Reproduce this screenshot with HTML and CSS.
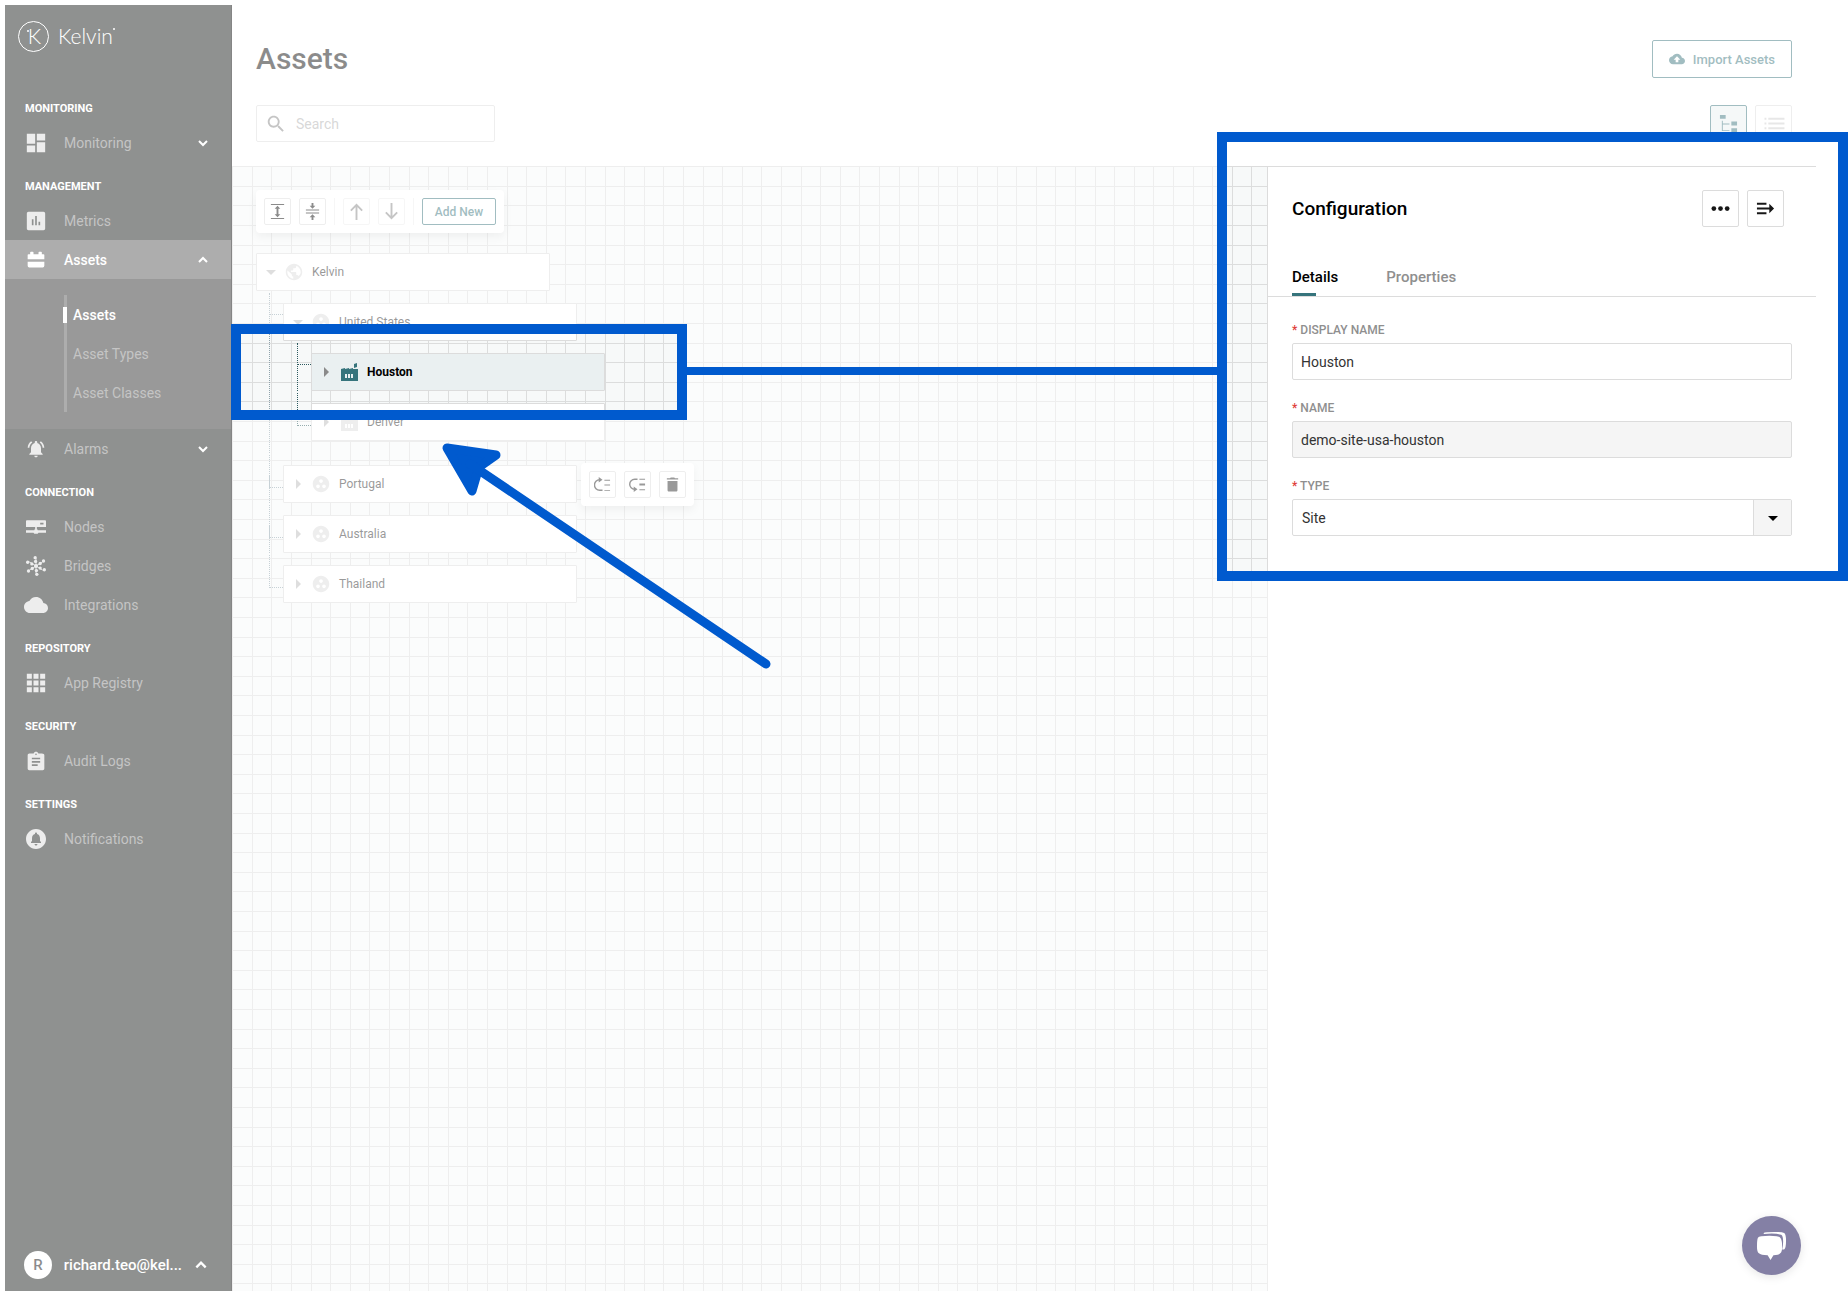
FILE: index.html
```
<!DOCTYPE html>
<html lang="en">
<head>
    <meta charset="UTF-8">
    <meta name="viewport" content="width=device-width, initial-scale=1.0">
    <title>Kelvin - Assets</title>
    <link rel="stylesheet" href="styles.css">
</head>
<body>
    <!-- Shared icons -->
    <svg class="sprite" aria-hidden="true">
        <symbol id="i-down" viewBox="0 0 12 12"><path d="M2 4l4 4 4-4" fill="none" stroke="currentColor" stroke-width="2"/></symbol>
        <symbol id="i-up" viewBox="0 0 12 12"><path d="M2 8l4-4 4 4" fill="none" stroke="currentColor" stroke-width="2"/></symbol>
        <symbol id="i-caret-down" viewBox="0 0 10 10"><path d="M0 3h10L5 8z"/></symbol>
        <symbol id="i-caret-right" viewBox="0 0 10 10"><path d="M3 0v10l5-5z"/></symbol>
        <symbol id="i-group" viewBox="0 0 24 24"><path d="M12 1C6 1 1 6 1 12s5 11 11 11 11-5 11-11S18 1 12 1zM8 17.500c-1.380 0-2.500-1.120-2.500-2.500s1.120-2.500 2.500-2.500 2.500 1.120 2.500 2.500-1.120 2.500-2.500 2.500zM9.500 8c0-1.380 1.120-2.500 2.500-2.500s2.500 1.120 2.500 2.500-1.120 2.500-2.500 2.500S9.500 9.380 9.500 8zm6.500 9.500c-1.380 0-2.500-1.120-2.500-2.500s1.120-2.500 2.500-2.500 2.500 1.120 2.500 2.500-1.120 2.500-2.500 2.500z"/></symbol>
        <symbol id="i-site" viewBox="0 0 18 18"><path fill-rule="evenodd" d="M1 6l4-1v1l4-1v1l4-1v1h5v12H1zM5 11v4h2v-4zM8 11v4h2v-4zM11 11v4h2v-4zM14 1l3-1v4l-3 1z"/></symbol>
    </svg>

    <div class="page">
        <nav class="sidebar">
            <div class="logo"><span class="logo-mark">K</span><span class="logo-name">Kelvin</span></div>

            <h2 class="nav-heading">MONITORING</h2>
            <a class="nav-item" href="#">
                <svg class="nav-icon" viewBox="0 0 24 24"><path d="M1 13h10V1H1v12zm0 10h10v-8H1v8zm12 0h10V11H13v12zm0-22v8h10V1H13z"/></svg>
                <span>Monitoring</span>
                <svg class="chevron"><use href="#i-down"/></svg>
            </a>

            <h2 class="nav-heading">MANAGEMENT</h2>
            <a class="nav-item" href="#">
                <svg class="nav-icon" viewBox="0 0 24 24"><path d="M21 1H3C1.900 1 1 1.900 1 3v18c0 1.100.9 2 2 2h18c1.100 0 2-.9 2-2V3c0-1.100-.9-2-2-2zM9 17H7v-7h2v7zm4 0h-2V6h2v11zm4 0h-2v-4h2v4z"/></svg>
                <span>Metrics</span>
            </a>
            <a class="nav-item nav-item-open" href="#">
                <svg class="nav-icon" viewBox="0 0 24 24"><path d="M2 6q0-1 1-1h2V3q0-1 1-1h2q1 0 1 1v2h6V3q0-1 1-1h2q1 0 1 1v2h2q1 0 1 1v5H2zM2 14h20v5q0 2-2 2H4q-2 0-2-2z"/></svg>
                <span>Assets</span>
                <svg class="chevron"><use href="#i-up"/></svg>
            </a>
            <div class="submenu">
                <a class="submenu-item active" href="#">Assets</a>
                <a class="submenu-item" href="#">Asset Types</a>
                <a class="submenu-item" href="#">Asset Classes</a>
            </div>
            <a class="nav-item" href="#">
                <svg class="nav-icon" viewBox="0 0 24 24"><path d="M7.580 4.080L6.150 2.650C3.750 4.480 2.170 7.300 2.030 10.500h2c.15-2.650 1.510-4.970 3.550-6.420zm12.390 6.420h2c-.15-3.200-1.730-6.020-4.120-7.850l-1.420 1.430c2.020 1.450 3.390 3.770 3.540 6.420zM18 11c0-3.070-1.640-5.640-4.500-6.320V4c0-.83-.67-1.500-1.500-1.500s-1.500.67-1.500 1.500v.68C7.630 5.360 6 7.920 6 11v5l-2 2v1h16v-1l-2-2v-5zm-6 11c1.100 0 2-.9 2-2h-4c0 1.100.9 2 2 2z"/></svg>
                <span>Alarms</span>
                <svg class="chevron"><use href="#i-down"/></svg>
            </a>

            <h2 class="nav-heading">CONNECTION</h2>
            <a class="nav-item" href="#">
                <svg class="nav-icon" viewBox="0 0 24 24"><path fill-rule="evenodd" d="M1 4h22q1 0 1 1v7H0V5q0-1 1-1zM17 7v2h4V7zM11 12h2v3h1v1h10v3h-9l-1 1h-4l-1-1H0v-3h10v-1h1z"/></svg>
                <span>Nodes</span>
            </a>
            <a class="nav-item" href="#">
                <svg class="nav-icon" viewBox="0 0 24 24"><path d="M12 3v18M4 7l16 10M20 7L4 17" stroke="currentColor" stroke-width="1"/><circle cx="12" cy="12" r="2.500"/><circle cx="11" cy="2" r="2"/><circle cx="13" cy="22" r="2"/><circle cx="2" cy="7.500" r="2"/><circle cx="21" cy="6" r="2"/><circle cx="3" cy="18" r="2"/><circle cx="22" cy="16.500" r="2"/><circle cx="11.500" cy="6.500" r="2"/><circle cx="12.500" cy="17.500" r="2"/><circle cx="7" cy="9.500" r="2"/><circle cx="17" cy="9" r="2"/><circle cx="7.500" cy="15" r="2"/><circle cx="17" cy="14.500" r="2"/></svg>
                <span>Bridges</span>
            </a>
            <a class="nav-item" href="#">
                <svg class="nav-icon nav-icon-lg" viewBox="0 0 24 24"><path d="M19.350 10.040C18.670 6.590 15.640 4 12 4 9.110 4 6.600 5.640 5.350 8.040 2.340 8.360 0 10.910 0 14c0 3.310 2.690 6 6 6h13c2.760 0 5-2.240 5-5 0-2.640-2.050-4.780-4.650-4.960z"/></svg>
                <span>Integrations</span>
            </a>

            <h2 class="nav-heading">REPOSITORY</h2>
            <a class="nav-item" href="#">
                <svg class="nav-icon" viewBox="0 0 24 24"><path d="M1 1h6v6H1zM9 1h6v6H9zM17 1h6v6h-6zM1 9h6v6H1zM9 9h6v6H9zM17 9h6v6h-6zM1 17h6v6H1zM9 17h6v6H9zM17 17h6v6h-6z"/></svg>
                <span>App Registry</span>
            </a>

            <h2 class="nav-heading">SECURITY</h2>
            <a class="nav-item" href="#">
                <svg class="nav-icon" viewBox="0 0 24 24"><path d="M19 3h-4.180C14.400 1.840 13.300 1 12 1c-1.300 0-2.400.84-2.820 2H4c-1.100 0-2 .9-2 2v16c0 1.100.9 2 2 2h16c1.100 0 2-.9 2-2V5c0-1.100-.9-2-3-2zm-7 0c.55 0 1 .45 1 1s-.45 1-1 1-1-.45-1-1 .45-1 1-1zm2 15H7v-2h7v2zm3-4H7v-2h10v2zm0-4H7V8h10v2z"/></svg>
                <span>Audit Logs</span>
            </a>

            <h2 class="nav-heading">SETTINGS</h2>
            <a class="nav-item" href="#">
                <svg class="nav-icon nav-icon-lg" viewBox="0 0 24 24"><path d="M12 2C6.480 2 2 6.480 2 12s4.480 10 10 10 10-4.480 10-10S17.520 2 12 2zm0 16.500c-.83 0-1.500-.67-1.500-1.500h3c0 .83-.67 1.500-1.500 1.500zm5-2.500H7v-1l1-1v-2.610C8 9.270 9.030 7.470 11 7v-.5c0-.57.43-1 1-1s1 .43 1 1V7c1.970.47 3 2.280 3 4.390V14l1 1v1z"/></svg>
                <span>Notifications</span>
            </a>

            <a class="user" href="#">
                <span class="avatar">R</span>
                <span class="user-name">richard.teo@kel...</span>
                <svg class="chevron chevron-lg"><use href="#i-up"/></svg>
            </a>
        </nav>

        <main class="main">
            <header class="header">
                <div class="header-row">
                    <h1>Assets</h1>
                    <button class="btn-outline btn-import">
                        <svg viewBox="0 0 24 24"><path d="M19.350 10.040C18.670 6.590 15.640 4 12 4 9.110 4 6.600 5.640 5.350 8.040 2.340 8.360 0 10.910 0 14c0 3.310 2.690 6 6 6h13c2.760 0 5-2.240 5-5 0-2.640-2.050-4.780-4.650-4.960zM14 13v4h-4v-4H7l5-5 5 5h-3z"/></svg>
                        Import Assets
                    </button>
                </div>
                <div class="header-row">
                    <label class="search">
                        <svg viewBox="0 0 24 24"><path d="M15.500 14h-.79l-.28-.27C15.410 12.590 16 11.110 16 9.500 16 5.910 13.090 3 9.500 3S3 5.910 3 9.500 5.910 16 9.500 16c1.610 0 3.090-.59 4.230-1.570l.27.28v.79l5 4.990L20.490 19l-4.990-5zm-6 0C7.010 14 5 11.990 5 9.500S7.010 5 9.500 5 14 7.010 14 9.500 11.990 14 9.500 14z"/></svg>
                        <input type="search" placeholder="Search" aria-label="Search">
                    </label>
                    <div class="button-group">
                        <button class="btn-square selected" aria-label="Tree view">
                            <svg viewBox="0 0 20 20"><path d="M1 1h6v4H1zM13 8h6v4h-6zM13 15h6v4h-6zM3 7h1v3h7v1H4v6h7v1H3z"/></svg>
                        </button>
                        <button class="btn-square muted" aria-label="List view">
                            <svg class="icon-wide" viewBox="0 0 22 20"><path d="M1 4h2v2H1zM5 4h17v2H5zM1 9h2v2H1zM5 9h17v2H5zM1 14h2v2H1zM5 14h17v2H5z"/></svg>
                        </button>
                    </div>
                </div>
            </header>

            <div class="workspace">
                <section class="canvas">
                    <div class="toolbar">
                        <button class="btn-tool" aria-label="Expand all"><svg viewBox="0 0 18 18"><path d="M2 1h14v1H2zM2 16h14v1H2zM8 6h2v6h2l-3 3-3-3h2zM6 6l3-3 3 3z"/></svg></button>
                        <button class="btn-tool" aria-label="Collapse all"><svg viewBox="0 0 18 18"><path d="M2 7h14v1H2zM2 10h14v1H2zM8 0h2v3h2L9 6 6 3h2zM8 18h2v-3h2l-3-3-3 3h2z"/></svg></button>
                        <span class="separator"></span>
                        <button class="btn-tool" disabled aria-label="Move up"><svg viewBox="0 0 18 18"><path d="M9 18V2M3 8l6-6 6 6" fill="none" stroke="currentColor" stroke-width="2"/></svg></button>
                        <button class="btn-tool" disabled aria-label="Move down"><svg viewBox="0 0 18 18"><path d="M9 0v16M3 10l6 6 6-6" fill="none" stroke="currentColor" stroke-width="2"/></svg></button>
                        <span class="separator"></span>
                        <button class="btn-outline btn-add">Add New</button>
                    </div>

                    <div class="tree">
                        <div class="node">
                            <svg class="caret"><use href="#i-caret-down"/></svg>
                            <svg class="node-icon" viewBox="0 0 24 24"><path d="M12 1C6 1 1 6 1 12s5 11 11 11 11-5 11-11S18 1 12 1zm-1 19.900c-4.400-.5-7.900-4.300-7.900-8.900 0-.7.1-1.300.2-2L9 15v1c0 1.100.9 2 2 2v2.900zm7-3.500c-.3-.8-1-1.400-2-1.400h-1v-3c0-.55-.45-1-1-1H8v-2h2c.55 0 1-.45 1-1V7h2c1.100 0 2-.9 2-2V3.700c3.300 1.300 5.900 4.500 5.900 8.300 0 2.100-1 4-2.900 5.400z"/></svg>
                            <span>Kelvin</span>
                        </div>
                        <ul class="branch">
                            <li>
                                <div class="node">
                                    <svg class="caret"><use href="#i-caret-down"/></svg>
                                    <svg class="node-icon"><use href="#i-group"/></svg>
                                    <span>United States</span>
                                </div>
                                <ul class="branch branch-active">
                                    <li>
                                        <div class="node selected">
                                            <svg class="caret"><use href="#i-caret-right"/></svg>
                                            <svg class="node-icon"><use href="#i-site"/></svg>
                                            <span>Houston</span>
                                        </div>
                                    </li>
                                    <li>
                                        <div class="node">
                                            <svg class="caret"><use href="#i-caret-right"/></svg>
                                            <svg class="node-icon"><use href="#i-site"/></svg>
                                            <span>Denver</span>
                                        </div>
                                    </li>
                                </ul>
                            </li>
                            <li>
                                <div class="node">
                                    <svg class="caret"><use href="#i-caret-right"/></svg>
                                    <svg class="node-icon"><use href="#i-group"/></svg>
                                    <span>Portugal</span>
                                    <div class="node-actions">
                                        <button class="btn-tool" aria-label="Add above"><svg viewBox="0 0 18 18"><path d="M11 4h6v1h-6zM11 9h6v1h-6zM11 15h6v1h-6zM5 1l4 3-4 3z"/><path d="M6 4a5 5 0 0 0 0 11h3" fill="none" stroke="currentColor" stroke-width="1.500"/></svg></button>
                                        <button class="btn-tool" aria-label="Add below"><svg viewBox="0 0 18 18"><path d="M11 3h6v1h-6zM11 8h6v2h-6zM11 14h6v1h-6zM5 11l4 3-4 3z"/><path d="M9 3.500H6a5 5 0 0 0 0 10.500" fill="none" stroke="currentColor" stroke-width="1.500"/></svg></button>
                                        <button class="btn-tool" aria-label="Delete"><svg viewBox="0 0 24 24"><path d="M5 20c0 1.100.9 2 2 2h10c1.100 0 2-.9 2-2V7H5v13zM20 3h-4.500l-1-1h-5l-1 1H4v2h16V3z"/></svg></button>
                                    </div>
                                </div>
                            </li>
                            <li>
                                <div class="node">
                                    <svg class="caret"><use href="#i-caret-right"/></svg>
                                    <svg class="node-icon"><use href="#i-group"/></svg>
                                    <span>Australia</span>
                                </div>
                            </li>
                            <li>
                                <div class="node">
                                    <svg class="caret"><use href="#i-caret-right"/></svg>
                                    <svg class="node-icon"><use href="#i-group"/></svg>
                                    <span>Thailand</span>
                                </div>
                            </li>
                        </ul>
                    </div>
                </section>

                <aside class="panel">
                    <div class="panel-header">
                        <h2>Configuration</h2>
                        <div class="button-group">
                            <button class="btn-square" aria-label="More"><svg viewBox="0 0 20 20"><circle cx="3" cy="10" r="2.500"/><circle cx="10" cy="10" r="2.500"/><circle cx="17" cy="10" r="2.500"/></svg></button>
                            <button class="btn-square" aria-label="Close panel"><svg viewBox="0 0 20 20"><path d="M1 4h10v2H1zM1 9h13V5l5 5-5 5v-4H1zM1 14h10v2H1z"/></svg></button>
                        </div>
                    </div>
                    <div class="tabs">
                        <button class="tab active">Details</button>
                        <button class="tab">Properties</button>
                    </div>
                    <form class="form">
                        <div class="field">
                            <label for="displayName"><span class="required">*</span> DISPLAY NAME</label>
                            <input type="text" id="displayName" value="Houston">
                        </div>
                        <div class="field">
                            <label for="name"><span class="required">*</span> NAME</label>
                            <input type="text" id="name" value="demo-site-usa-houston" readonly>
                        </div>
                        <div class="field">
                            <label for="type"><span class="required">*</span> TYPE</label>
                            <div class="select">
                                <select id="type"><option>Site</option></select>
                                <span class="select-arrow"><svg viewBox="0 0 10 10"><path d="M0 3h10L5 8z"/></svg></span>
                            </div>
                        </div>
                    </form>
                </aside>
            </div>
        </main>

        <!-- Tour layer: dims the page and points at the selected asset -->
        <div class="dim"></div>
        <div class="callout callout-node"></div>
        <div class="callout-line"></div>
        <div class="callout callout-panel"></div>
        <svg class="pointer" viewBox="0 0 340 240">
            <path d="M7 8l49 7-17 12-7 24z" fill="currentColor" stroke="currentColor" stroke-width="9" stroke-linejoin="round"/>
            <path d="M30 24L326 224" stroke="currentColor" stroke-width="9" stroke-linecap="round"/>
        </svg>

        <button class="chat" aria-label="Open chat">
            <svg viewBox="0 0 32 32"><path d="M8 3q1-1 11-1 8 0 10 1 2 1 2 8 0 8-2 9h-2q1-3 1-8 0-6-2-7-4-2-18-1z"/><path d="M2 8q1-2 12-2 10 0 11 2 2 2 2 9 0 6-2 7-1 2-7 2l-3 5-3-5q-7 0-9-2-2-1-2-7 0-7 1-9z"/></svg>
        </button>
    </div>
</body>
</html>
```
FILE: styles.css
```
* {
    box-sizing: border-box;
}
body {
    margin: 0;
    font-family: Roboto, "Liberation Sans", sans-serif;
    font-size: 14px;
    background: white;
    color: #171717;
}
h1, h2, ul {
    margin: 0;
    padding: 0;
}
button, input, select {
    font: inherit;
    color: inherit;
}
button {
    display: flex;
    align-items: center;
    justify-content: center;
    padding: 0;
    cursor: pointer;
}
a {
    color: inherit;
    text-decoration: none;
}
svg {
    fill: currentColor;
    flex-shrink: 0;
}
.sprite {
    position: absolute;
    width: 0;
    height: 0;
}
.page {
    position: relative;
    display: flex;
    min-height: 100vh;
    padding: 5px 32px 21px 5px;
}

/* Sidebar */
.sidebar {
    display: flex;
    flex-direction: column;
    width: 227px;
    flex-shrink: 0;
    background: #1f2321;
    border-right: 1px solid #0b0b0b;
    color: white;
}
.logo {
    display: flex;
    align-items: center;
    gap: 9px;
    height: 30px;
    margin: 16px 0 33px 13px;
    font-family: Lato, sans-serif;
    font-weight: 300;
    font-size: 21px;
    line-height: 28px;
}
.logo-mark {
    position: relative;
    display: flex;
    align-items: center;
    justify-content: center;
    width: 31px;
    height: 31px;
    padding-left: 2px;
    border: 1px solid white;
    border-radius: 50%;
}
.logo-name {
    position: relative;
}
.logo-mark::before, .logo-name::after {
    content: "";
    position: absolute;
    width: 2px;
    height: 2px;
    border-radius: 50%;
    background: white;
}
.logo-mark::before {
    top: 8px;
    left: 8px;
}
.logo-name::after {
    top: 6px;
    right: -2px;
}
.nav-heading {
    height: 39px;
    padding: 18px 20px 0;
    font-size: 11px;
    line-height: 14px;
    font-weight: 700;
}
.nav-item {
    display: flex;
    align-items: center;
    gap: 16px;
    height: 39px;
    padding: 0 22px 0 19px;
    color: #8a8a8a;
}
.nav-icon {
    width: 20px;
    height: 20px;
    margin: 0 2px;
    color: #dbdbdb;
}
.nav-icon-lg {
    width: 24px;
    height: 24px;
    margin: 0;
}
.chevron {
    width: 12px;
    height: 12px;
    margin-left: auto;
    color: white;
}
.nav-item-open {
    background: #5b5b5b;
    color: white;
    font-weight: 500;
}
.nav-item-open .nav-icon {
    color: white;
}
.submenu {
    padding: 16px 0 17px 59px;
    background: #333;
}
.submenu-item {
    display: flex;
    align-items: center;
    height: 39px;
    border-left: 3px solid #5b5b5b;
    padding-left: 6px;
    color: #8a8a8a;
}
.submenu-item.active {
    position: relative;
    color: white;
    font-weight: 500;
}
.submenu-item.active::before {
    content: "";
    position: absolute;
    left: -4px;
    width: 4px;
    height: 16px;
    background: white;
}
.user {
    display: flex;
    align-items: center;
    gap: 12px;
    margin-top: auto;
    padding: 12px 23px 12px 19px;
    font-size: 15px;
    font-weight: 500;
}
.avatar {
    width: 28px;
    height: 28px;
    border-radius: 50%;
    background: white;
    color: #171717;
    line-height: 28px;
    text-align: center;
}
.chevron-lg {
    width: 14px;
    height: 14px;
}

/* Header */
.main {
    display: flex;
    flex-direction: column;
    flex: 1;
    min-width: 0;
}
.header {
    display: flex;
    flex-direction: column;
    gap: 27px;
    padding: 35px 24px 24px;
    border-bottom: 1px solid #dcdcdc;
}
.header-row {
    display: flex;
    align-items: center;
    justify-content: space-between;
}
h1 {
    font-size: 30px;
    line-height: 38px;
    font-weight: 500;
}
.btn-outline {
    border: 1px solid #437a82;
    border-radius: 2px;
    background: white;
    color: #437a82;
    font-weight: 500;
}
.btn-import {
    gap: 8px;
    height: 38px;
    padding: 0 16px;
    font-size: 13px;
}
.btn-import svg {
    width: 16px;
    height: 16px;
}
.search {
    display: flex;
    align-items: center;
    gap: 9px;
    width: 239px;
    height: 37px;
    padding: 0 8px;
    border: 1px solid #dcdcdc;
    border-radius: 2px;
    color: #8a8a8a;
}
.search svg {
    width: 22px;
    height: 22px;
}
.search input {
    flex: 1;
    min-width: 0;
    border: none;
    outline: none;
    padding: 0;
    background: none;
}
.search input::placeholder {
    color: #b0b0b0;
}
.button-group {
    display: flex;
    gap: 8px;
}
.btn-square {
    width: 37px;
    height: 37px;
    border: 1px solid #dcdcdc;
    border-radius: 2px;
    background: white;
}
.btn-square svg {
    width: 19px;
    height: 19px;
}
.btn-square .icon-wide {
    width: 22px;
}
.btn-square.selected {
    border-color: #437a82;
    background: #eaf0f1;
    color: #437a82;
}
.btn-square.muted {
    color: #cfcfcf;
}

/* Canvas */
.workspace {
    display: flex;
    flex: 1;
}
.canvas {
    --line: #dcdddd;
    --stops: var(--line) 0 1px, transparent 1px 20px, var(--line) 20px 21px, transparent 21px 39px, var(--line) 39px 40px, transparent 40px 59px, var(--line) 59px 60px, transparent 60px 79px, var(--line) 79px 80px, transparent 80px;
    flex: 1;
    padding: 23px 24px;
    background-color: #f7f9f9;
    background-image: linear-gradient(to right, var(--stops)), linear-gradient(to bottom, var(--stops));
    background-size: 98px 98px;
    background-position: 0 -1px;
}
.toolbar, .node-actions {
    display: flex;
    gap: 8px;
    width: max-content;
    padding: 8px;
    border-radius: 4px;
    background: white;
    box-shadow: 0 4px 10px rgba(0,0,0,0.1);
}
.btn-tool {
    width: 27px;
    height: 27px;
    border: 1px solid #dcdcdc;
    border-radius: 2px;
    background: white;
}
.btn-tool svg {
    width: 17px;
    height: 17px;
}
.btn-tool:disabled {
    border-color: #ececec;
    color: #8a8a8a;
}
.separator {
    width: 1px;
    background: #ececec;
}
.btn-add {
    width: 74px;
    height: 27px;
    font-size: 12px;
}
.tree {
    margin-top: 20px;
    font-size: 12px;
    color: #333;
}
.node {
    position: relative;
    display: flex;
    align-items: center;
    gap: 9px;
    width: 294px;
    height: 38px;
    padding-left: 9px;
    border: 1px solid #dcdcdc;
    border-radius: 1px;
    background: white;
}
.caret {
    width: 10px;
    height: 10px;
    color: #bdbdbd;
}
.node-icon {
    width: 18px;
    height: 18px;
    color: #dcdcdc;
}
.node.selected {
    background: #eaf0f1;
    color: black;
    font-weight: 700;
}
.node.selected .caret {
    color: #8a8a8a;
}
.node.selected .node-icon {
    color: #36747c;
}
.node-actions {
    position: absolute;
    left: calc(100% + 5px);
    top: -3px;
}
.branch {
    --dots: #8fa3ac;
    padding-left: 27px;
    list-style: none;
}
.branch-active {
    --dots: #2d5a5f;
    padding-left: 28px;
    padding-bottom: 12px;
}
.branch > li {
    position: relative;
    padding-top: 12px;
}
/* Dotted connectors between a parent and its children */
.branch > li::before {
    content: "";
    position: absolute;
    top: 2px;
    left: -14px;
    width: 13px;
    height: 32px;
    border-left: 1px dotted var(--dots);
    border-bottom: 1px dotted var(--dots);
}
.branch > li:first-child::before {
    height: 21px;
}
.branch > li:not(:last-child)::after {
    content: "";
    position: absolute;
    top: 23px;
    bottom: 0;
    left: -14px;
    border-left: 1px dotted var(--dots);
}

/* Configuration panel */
.panel {
    width: 549px;
    border-left: 1px solid #dcdcdc;
    background: white;
}
.panel-header {
    display: flex;
    align-items: center;
    justify-content: space-between;
    padding: 23px 32px 0 24px;
}
.panel-header h2 {
    font-size: 19px;
    font-weight: 500;
    color: black;
}
.tabs {
    display: flex;
    gap: 48px;
    margin-top: 31px;
    padding-left: 24px;
    border-bottom: 1px solid #dcdcdc;
}
.tab {
    position: relative;
    height: 38px;
    border: none;
    background: none;
    color: #8f8f8f;
    font-size: 15px;
    font-weight: 500;
}
.tab.active {
    color: black;
}
.tab.active::after {
    content: "";
    position: absolute;
    left: 0;
    bottom: 0;
    width: 24px;
    height: 3px;
    background: #36747c;
}
.form {
    display: flex;
    flex-direction: column;
    gap: 20px;
    padding: 25px 24px 24px;
}
.field label {
    display: block;
    margin-bottom: 5px;
    font-size: 12px;
    line-height: 16px;
    font-weight: 500;
    color: #8f8f8f;
}
.required {
    color: #e0403a;
}
.field > input, .select {
    display: flex;
    width: 100%;
    height: 37px;
    border: 1px solid #dcdcdc;
    border-radius: 2px;
    background: white;
    color: #333;
}
.field > input {
    padding: 0 8px;
}
.field > input:read-only {
    background: #f5f5f5;
}
.select select {
    flex: 1;
    padding: 0 9px;
    border: none;
    background: none;
    appearance: none;
}
.select-arrow {
    display: flex;
    align-items: center;
    justify-content: center;
    width: 38px;
    border-left: 1px solid #dcdcdc;
    background: #f5f5f5;
    color: black;
}
.select-arrow svg {
    width: 10px;
    height: 10px;
}

/* Tour layer */
.dim {
    position: absolute;
    inset: 0;
    background: rgba(255,255,255,0.5);
    pointer-events: none;
    clip-path: polygon(evenodd,
        0 0, 100% 0, 100% 100%, 0 100%, 0 0,
        236px 329px, 682px 329px, 682px 415px, 236px 415px, 236px 329px,
        0 0,
        calc(100% - 626px) 137px, calc(100% - 5px) 137px, calc(100% - 5px) 576px, calc(100% - 626px) 576px, calc(100% - 626px) 137px,
        0 0);
}
.callout {
    position: absolute;
    border: 10px solid #005ace;
    pointer-events: none;
}
.callout-node {
    top: 324px;
    left: 231px;
    width: 456px;
    height: 96px;
}
.callout-panel {
    top: 132px;
    right: 0;
    width: 631px;
    height: 449px;
}
.callout-line {
    position: absolute;
    top: 367px;
    left: 687px;
    right: 631px;
    height: 8px;
    background: #005ace;
}
.pointer {
    position: absolute;
    top: 440px;
    left: 440px;
    width: 340px;
    height: 240px;
    color: #005ace;
    pointer-events: none;
}
.chat {
    position: absolute;
    right: 47px;
    bottom: 37px;
    width: 59px;
    height: 59px;
    border: none;
    border-radius: 50%;
    background: #8480a5;
    color: white;
    box-shadow: 0 2px 10px rgba(0,0,0,0.1);
}
.chat svg {
    width: 31px;
    height: 31px;
}
```
